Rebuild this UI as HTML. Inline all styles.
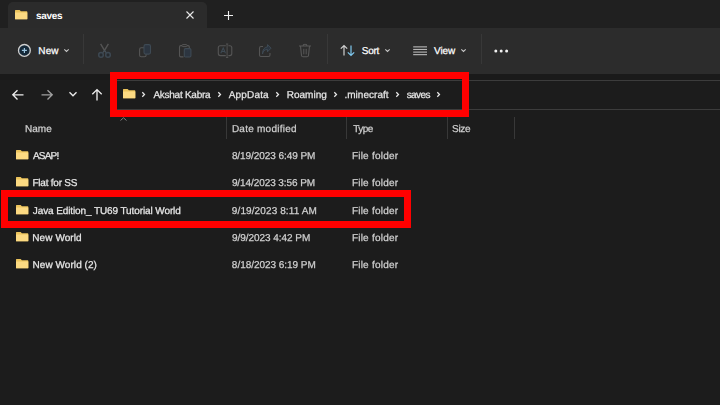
<!DOCTYPE html>
<html><head><meta charset="utf-8">
<style>
html,body{margin:0;padding:0;width:720px;height:405px;overflow:hidden;background:#1c1c1c;font-family:"Liberation Sans",sans-serif;}
.a{position:absolute;}
.t{position:absolute;white-space:nowrap;font-size:10px;line-height:10px;text-rendering:geometricPrecision;-webkit-text-stroke:0.25px currentColor;}
</style></head><body><div id="w" style="position:absolute;left:0;top:0;width:720px;height:405px;filter:blur(0.3px)">
<svg width="0" height="0" style="position:absolute"><defs><g id="fold"><path d="M0 0.6 Q0 0 0.6 0 H4.6 L5.9 1.3 H11.7 Q12.3 1.3 12.3 1.9 V8.7 Q12.3 9.3 11.7 9.3 H0.6 Q0 9.3 0 8.7Z" fill="#ecc45c"/>
  <path d="M0 2.5 H12.3 V8.7 Q12.3 9.3 11.7 9.3 H0.6 Q0 9.3 0 8.7Z" fill="#fcda82"/></g></defs></svg>
<div class="a" style="left:0;top:0;width:720px;height:28px;background:#202020"></div>
<div class="a" style="left:8px;top:2px;width:199px;height:30px;background:#2b2b2b;border-radius:5px 5px 0 0"></div>
<div class="a" style="left:0;top:28px;width:720px;height:46px;background:#2c2c2c"></div>
<div class="a" style="left:0;top:74px;width:720px;height:6px;background:#1a1a1a"></div>
<div class="a" style="left:110px;top:80px;width:610px;height:1px;background:#3c3c3c"></div>
<div class="a" style="left:110px;top:109px;width:610px;height:1px;background:#3c3c3c"></div>

<svg class="a" style="left:15.4px;top:9.8px;overflow:visible" width="13" height="10" viewBox="0 0 13 10"><use href="#fold"/></svg>
<div id="t0" class="t" style="left:35.92px;top:11.50px;color:#fff;letter-spacing:-0.267px;font-weight:bold;-webkit-text-stroke:0">saves</div>
<svg class="a" style="left:185px;top:10px" width="10" height="10" viewBox="0 0 10 10"><path d="M1.5 1.5L8.5 8.5M8.5 1.5L1.5 8.5" stroke="#e8e8e8" stroke-width="1.1"/></svg>
<svg class="a" style="left:223px;top:10px" width="11" height="11" viewBox="0 0 11 11"><path d="M5.5 1V10M1 5.5H10" stroke="#f0f0f0" stroke-width="1.1"/></svg>
<svg class="a" style="left:17px;top:43px" width="15" height="15" viewBox="0 0 15 15">
  <circle cx="7.4" cy="7.4" r="5.9" fill="#142838" stroke="#d0d0d0" stroke-width="1.3"/>
  <path d="M7.4 4.9V9.9M4.9 7.4H9.9" stroke="#9cc4de" stroke-width="1.2"/></svg>
<div id="t1" class="t" style="left:38.37px;top:47.40px;color:#fff;letter-spacing:0.077px;">New</div>
<svg class="a" style="left:63px;top:48px" width="7" height="5" viewBox="0 0 7 5"><path d="M1.3 1.4L3.5 3.5L5.7 1.4" stroke="#c8c8c8" stroke-width="1.05" fill="none"/></svg>
<div class="a" style="left:83px;top:34px;width:1px;height:30px;background:#383838"></div>
<svg class="a" style="left:96px;top:42px" width="17" height="17" viewBox="0 0 17 17">
  <path d="M4.6 1.8L8.5 8.3L12.4 1.8" stroke="#545454" stroke-width="1.4" fill="none"/>
  <path d="M8.5 8.3L6.6 10.8M8.5 8.3L10.4 10.8" stroke="#48525a" stroke-width="1.2" fill="none"/>
  <circle cx="5" cy="12.9" r="2.3" fill="#262b30" stroke="#3d4852" stroke-width="1.5"/>
  <circle cx="12" cy="12.9" r="2.3" fill="#262b30" stroke="#3d4852" stroke-width="1.5"/></svg>
<svg class="a" style="left:137px;top:42px" width="16" height="17" viewBox="0 0 16 17">
  <rect x="2.6" y="5.8" width="6.5" height="9" rx="1.6" fill="none" stroke="#555" stroke-width="1.1"/>
  <rect x="7" y="2.6" width="6.5" height="9.5" rx="1.6" fill="#2c3540" stroke="#3e4a54" stroke-width="1.1"/></svg>
<svg class="a" style="left:177px;top:42px" width="16" height="17" viewBox="0 0 16 17">
  <path d="M5 3.6H3.8Q2.5 3.6 2.5 4.9V13.6Q2.5 14.9 3.8 14.9H6.5" fill="none" stroke="#555" stroke-width="1.1"/>
  <path d="M10 3.6H11Q12.3 3.6 12.3 4.9V6" fill="none" stroke="#555" stroke-width="1.1"/>
  <rect x="5" y="2.6" width="5" height="2" rx="0.8" fill="none" stroke="#555" stroke-width="1"/>
  <rect x="7.3" y="6.6" width="6.6" height="8.4" rx="1.2" fill="#2c3540" stroke="#3e4a54" stroke-width="1.1"/></svg>
<svg class="a" style="left:216px;top:42px" width="18" height="17" viewBox="0 0 18 17">
  <rect x="2.3" y="3.8" width="13.5" height="9.8" rx="2" fill="none" stroke="#555" stroke-width="1.1"/>
  <path d="M4.8 11.2L7.2 6L9.6 11.2M5.7 9.5H8.7" stroke="#3e4a54" stroke-width="1.1" fill="none"/>
  <rect x="9.8" y="1.5" width="2.6" height="14.5" fill="#2c2c2c"/>
  <path d="M11.1 2V15.5M9.9 2H12.3M9.9 15.5H12.3" stroke="#555" stroke-width="0.9"/></svg>
<svg class="a" style="left:257px;top:42px" width="16" height="17" viewBox="0 0 16 17">
  <path d="M6 4.5H4Q2.5 4.5 2.5 6V13Q2.5 14.5 4 14.5H11.5Q13 14.5 13 13V11" fill="none" stroke="#555" stroke-width="1.1"/>
  <path d="M5.5 12Q6 7.5 10.5 7.5V9.8L14 6.2L10.5 2.6V4.9Q5.8 5.2 5.5 12Z" fill="#2c3540" stroke="#3e4a54" stroke-width="1"/></svg>
<svg class="a" style="left:297px;top:42px" width="16" height="17" viewBox="0 0 16 17">
  <path d="M2 4H14M6 4Q6 2.3 8 2.3Q10 2.3 10 4M3.5 4L4.5 13.5Q4.7 14.8 6 14.8H10Q11.3 14.8 11.5 13.5L12.5 4" fill="none" stroke="#585858" stroke-width="1.1"/>
  <path d="M6.8 6.8V12.3M9.2 6.8V12.3" stroke="#585858" stroke-width="1"/></svg>
<div class="a" style="left:327px;top:34px;width:1px;height:30px;background:#383838"></div>
<svg class="a" style="left:339px;top:43px" width="18" height="15" viewBox="0 0 18 15">
  <path d="M5 2.5V12.5M1.8 5.7L5 2.5L8.2 5.7" stroke="#d0d0d0" stroke-width="1.2" fill="none"/>
  <path d="M12 2.5V12.5M8.8 9.3L12 12.5L15.2 9.3" stroke="#7fc8ee" stroke-width="1.2" fill="none"/></svg>
<div id="t2" class="t" style="left:361.76px;top:47.10px;color:#fff;letter-spacing:-0.247px;">Sort</div>
<svg class="a" style="left:384px;top:47.5px" width="7" height="5" viewBox="0 0 7 5"><path d="M1.3 1.4L3.5 3.5L5.7 1.4" stroke="#c8c8c8" stroke-width="1.05" fill="none"/></svg>
<svg class="a" style="left:412px;top:44px" width="16" height="13" viewBox="0 0 16 13">
  <path d="M1.2 2.9H15M1.2 5.4H15M1.2 8.1H15M1.2 10.7H15" stroke="#d0d0d0" stroke-width="0.95"/></svg>
<div id="t3" class="t" style="left:434.05px;top:47.30px;color:#fff;letter-spacing:-0.131px;">View</div>
<svg class="a" style="left:460px;top:47.5px" width="7" height="5" viewBox="0 0 7 5"><path d="M1.3 1.4L3.5 3.5L5.7 1.4" stroke="#c8c8c8" stroke-width="1.05" fill="none"/></svg>
<div class="a" style="left:481px;top:34px;width:1px;height:30px;background:#383838"></div>
<svg class="a" style="left:493px;top:47px" width="17" height="8" viewBox="0 0 17 8">
  <circle cx="2.8" cy="4" r="1.5" fill="#f0f0f0"/><circle cx="8.2" cy="4" r="1.5" fill="#f0f0f0"/><circle cx="13.6" cy="4" r="1.5" fill="#f0f0f0"/></svg>
<svg class="a" style="left:11px;top:88px" width="14" height="14" viewBox="0 0 14 14">
  <path d="M12.5 6.8H2M6.5 2.2L1.8 6.8L6.5 11.4" stroke="#ececec" stroke-width="1.35" fill="none"/></svg>
<svg class="a" style="left:40px;top:88px" width="14" height="14" viewBox="0 0 14 14">
  <path d="M1.5 6.8H12M7.5 2.2L12.2 6.8L7.5 11.4" stroke="#a0a0a0" stroke-width="1.35" fill="none"/></svg>
<svg class="a" style="left:68px;top:90px" width="10" height="8" viewBox="0 0 10 8">
  <path d="M1.5 2.3L5 5.8L8.5 2.3" stroke="#ececec" stroke-width="1.35" fill="none"/></svg>
<svg class="a" style="left:90px;top:88px" width="14" height="14" viewBox="0 0 14 14">
  <path d="M7 12.5V2M2.3 6.3L7 1.6L11.7 6.3" stroke="#ececec" stroke-width="1.35" fill="none"/></svg>
<svg class="a" style="left:122.8px;top:88.9px;overflow:visible" width="13" height="10" viewBox="0 0 13 10"><use href="#fold"/></svg>
<svg class="a" style="left:141px;top:91px" width="5" height="7" viewBox="0 0 5 7"><path d="M1.3 1.2L3.5 3.5L1.3 5.8" stroke="#e8e8e8" stroke-width="1.25" fill="none"/></svg>
<div id="t4" class="t" style="left:153.41px;top:90.50px;color:#e6e6e6;letter-spacing:-0.260px;">Akshat Kabra</div>
<svg class="a" style="left:217px;top:91px" width="5" height="7" viewBox="0 0 5 7"><path d="M1.3 1.2L3.5 3.5L1.3 5.8" stroke="#e8e8e8" stroke-width="1.25" fill="none"/></svg>
<div id="t5" class="t" style="left:228.74px;top:90.50px;color:#e6e6e6;letter-spacing:0.166px;">AppData</div>
<svg class="a" style="left:275px;top:91px" width="5" height="7" viewBox="0 0 5 7"><path d="M1.3 1.2L3.5 3.5L1.3 5.8" stroke="#e8e8e8" stroke-width="1.25" fill="none"/></svg>
<div id="t6" class="t" style="left:286.65px;top:90.50px;color:#e6e6e6;letter-spacing:0.027px;">Roaming</div>
<svg class="a" style="left:333px;top:91px" width="5" height="7" viewBox="0 0 5 7"><path d="M1.3 1.2L3.5 3.5L1.3 5.8" stroke="#e8e8e8" stroke-width="1.25" fill="none"/></svg>
<div id="t7" class="t" style="left:344.42px;top:90.50px;color:#e6e6e6;letter-spacing:0.036px;">.minecraft</div>
<svg class="a" style="left:395px;top:91px" width="5" height="7" viewBox="0 0 5 7"><path d="M1.3 1.2L3.5 3.5L1.3 5.8" stroke="#e8e8e8" stroke-width="1.25" fill="none"/></svg>
<div id="t8" class="t" style="left:406.73px;top:90.50px;color:#e6e6e6;letter-spacing:-0.614px;">saves</div>
<svg class="a" style="left:436px;top:91px" width="5" height="7" viewBox="0 0 5 7"><path d="M1.3 1.2L3.5 3.5L1.3 5.8" stroke="#e8e8e8" stroke-width="1.25" fill="none"/></svg>
<div id="t9" class="t" style="left:24.95px;top:124.70px;color:#cfcfcf;letter-spacing:0.041px;">Name</div>
<svg class="a" style="left:119px;top:116px" width="9" height="6" viewBox="0 0 9 6"><path d="M1.5 4.5L4.5 1.8L7.5 4.5" stroke="#8a8a8a" stroke-width="0.9" fill="none"/></svg>
<div class="a" style="left:226px;top:117px;width:1px;height:22px;background:#383838"></div>
<div id="t10" class="t" style="left:231.89px;top:124.70px;color:#cfcfcf;letter-spacing:0.252px;">Date modified</div>
<div class="a" style="left:346px;top:117px;width:1px;height:22px;background:#383838"></div>
<div id="t11" class="t" style="left:353.21px;top:124.70px;color:#cfcfcf;letter-spacing:-0.522px;">Type</div>
<div class="a" style="left:447px;top:117px;width:1px;height:22px;background:#383838"></div>
<div id="t12" class="t" style="left:452.08px;top:124.70px;color:#cfcfcf;letter-spacing:-0.314px;">Size</div>
<div class="a" style="left:514px;top:117px;width:1px;height:22px;background:#383838"></div>
<svg class="a" style="left:16px;top:149.8px;overflow:visible" width="13" height="10" viewBox="0 0 13 10"><use href="#fold"/></svg>
<div id="t13" class="t" style="left:33.01px;top:151.80px;color:#e8e8e8;letter-spacing:-0.808px;">ASAP!</div>
<div id="t14" class="t" style="left:231.88px;top:151.80px;color:#d0d0d0;letter-spacing:-0.064px;">8/19/2023 6:49 PM</div>
<div id="t15" class="t" style="left:351.89px;top:151.80px;color:#d0d0d0;letter-spacing:0.232px;">File folder</div>
<svg class="a" style="left:16px;top:177.2px;overflow:visible" width="13" height="10" viewBox="0 0 13 10"><use href="#fold"/></svg>
<div id="t16" class="t" style="left:32.46px;top:179.20px;color:#e8e8e8;letter-spacing:-0.223px;">Flat for SS</div>
<div id="t17" class="t" style="left:231.89px;top:179.20px;color:#d0d0d0;letter-spacing:-0.082px;">9/14/2023 3:56 PM</div>
<div id="t18" class="t" style="left:351.89px;top:179.20px;color:#d0d0d0;letter-spacing:0.232px;">File folder</div>
<svg class="a" style="left:16px;top:204.6px;overflow:visible" width="13" height="10" viewBox="0 0 13 10"><use href="#fold"/></svg>
<div id="t19" class="t" style="left:32.84px;top:206.60px;color:#e8e8e8;letter-spacing:-0.107px;">Java Edition_ TU69 Tutorial World</div>
<div id="t20" class="t" style="left:231.85px;top:206.60px;color:#d0d0d0;letter-spacing:0.108px;">9/19/2023 8:11 AM</div>
<div id="t21" class="t" style="left:351.89px;top:206.60px;color:#d0d0d0;letter-spacing:0.232px;">File folder</div>
<svg class="a" style="left:16px;top:232.0px;overflow:visible" width="13" height="10" viewBox="0 0 13 10"><use href="#fold"/></svg>
<div id="t22" class="t" style="left:32.32px;top:234.00px;color:#e8e8e8;letter-spacing:0.075px;">New World</div>
<div id="t23" class="t" style="left:231.95px;top:234.00px;color:#d0d0d0;letter-spacing:-0.042px;">9/9/2023 4:42 PM</div>
<div id="t24" class="t" style="left:351.89px;top:234.00px;color:#d0d0d0;letter-spacing:0.232px;">File folder</div>
<svg class="a" style="left:16px;top:259.4px;overflow:visible" width="13" height="10" viewBox="0 0 13 10"><use href="#fold"/></svg>
<div id="t25" class="t" style="left:32.47px;top:261.40px;color:#e8e8e8;letter-spacing:0.063px;">New World (2)</div>
<div id="t26" class="t" style="left:231.86px;top:261.40px;color:#d0d0d0;letter-spacing:-0.033px;">8/18/2023 6:19 PM</div>
<div id="t27" class="t" style="left:351.89px;top:261.40px;color:#d0d0d0;letter-spacing:0.232px;">File folder</div>
<div class="a" style="left:110px;top:72px;width:345px;height:31px;border:7px solid #ff0000"></div>
<div class="a" style="left:1px;top:190px;width:396px;height:24px;border:7px solid #ff0000"></div>
</div></body></html>
